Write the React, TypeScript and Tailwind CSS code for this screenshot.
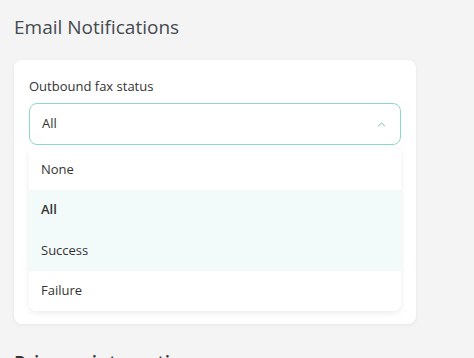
import { ChevronUp } from 'lucide-react';

const options = [
  { label: 'None', selected: false, hover: false },
  { label: 'All', selected: true, hover: true },
  { label: 'Success', selected: false, hover: true },
  { label: 'Failure', selected: false, hover: false },
];

export default function App() {
  return (
    <div className="h-[358px] w-[474px] overflow-hidden bg-[#f4f4f4] font-['Open_Sans',sans-serif]">
      <div className="px-[14px] pt-[14px]">
        {/* Section title */}
        <h1 className="text-[19px] leading-[26px] font-normal text-[#454a4f]">Email Notifications</h1>

        <div className="mt-[20px] w-[402px] rounded-lg bg-white px-[15px] pt-[17px] pb-[13px] shadow-[0_1px_4px_rgba(0,0,0,0.06)]">
          <label className="block text-[13px] leading-[18px] text-[#333]">Outbound fax status</label>

          <div className="mt-[8px] flex h-[42px] items-center justify-between rounded-lg border border-[#8ad9cb] bg-white pl-[12px] pr-[12px]">
            <span className="text-[13px] text-[#333]">All</span>
            <ChevronUp className="h-[13px] w-[13px] text-[#6cbfb1]" strokeWidth={1.75} />
          </div>

          {/* Open dropdown */}
          <ul className="mt-[4px] overflow-hidden rounded-b-lg bg-white shadow-[0_2px_6px_rgba(0,0,0,0.08)]">
            {options.map((o) => (
              <li
                key={o.label}
                className={`flex h-[40.5px] items-center px-[12px] text-[13px] text-[#333] ${
                  o.hover ? 'bg-[#f2fbfa]' : 'bg-white'
                } ${o.selected ? 'font-semibold' : 'font-normal'}`}
              >
                {o.label}
              </li>
            ))}
          </ul>
        </div>

        <h2 className="mt-[26px] text-[19px] leading-[26px] font-semibold text-[#333]">Primary integration</h2>
      </div>
    </div>
  );
}
